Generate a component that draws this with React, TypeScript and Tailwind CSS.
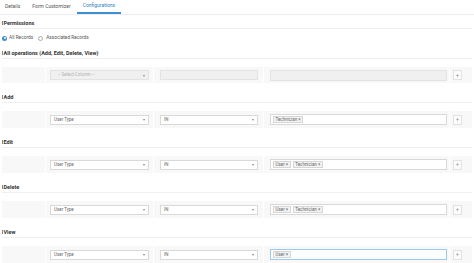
import React from "react";

const font = { fontFamily: "Roboto, 'Liberation Sans', sans-serif" };

function Arrow() {
  return <span className="ml-auto mr-[3px] inline-block h-0 w-0 border-x-[1.5px] border-t-[2px] border-x-transparent border-t-[#888]" />;
}

function Heading({ label, mt }: { label: string; mt: string }) {
  return (
    <div className={`${mt} mx-[2px] flex h-[11px] items-center border-b border-[#efefef] text-[5.5px] font-bold text-[#333]`}>
      <span className="mr-[0.5px] inline-block h-[4px] w-[1px] bg-[#888]" />
      {label}
    </div>
  );
}

function Select({ value, disabled }: { value: string; disabled?: boolean }) {
  return (
    <div
      className={`flex h-full items-center border pt-[1px] text-[4.5px] leading-none ${
        disabled
          ? "border-[#e3e3e3] bg-[#f0f0f0] pl-[7px] text-[#b0b0b0]"
          : "border-[#d9d9d9] bg-white pl-[3px] text-[#666]"
      }`}
    >
      {value}
      <Arrow />
    </div>
  );
}

function Tag({ label }: { label: string }) {
  return (
    <span className="mr-[2px] flex h-[7px] items-center border border-[#d6d6d6] bg-[#f4f4f4] px-[1.5px] pt-[0.5px] text-[4.5px] leading-none text-[#666]">
      {label} ×
    </span>
  );
}

function Row({
  disabled,
  tags = [],
  focus,
  h,
}: {
  disabled?: boolean;
  tags?: string[];
  focus?: boolean;
  h: string;
}) {
  return (
    <div className={`mx-[2px] mt-[8px] flex ${h} items-center bg-[#f8f8f8]`}>
      <div className="h-full w-[44px] border-r border-white" />
      <div className="flex h-full w-[108px] items-center border-r border-white pl-[4px]">
        <div className="h-[10px] w-[99px]">
          {disabled ? <Select value="-- Select Column --" disabled /> : <Select value="User Type" />}
        </div>
      </div>
      <div className="flex h-full w-[110px] items-center border-r border-white pl-[6px]">
        <div className="h-[10px] w-[98px]">
          {disabled ? (
            <div className="h-full border border-[#e3e3e3] bg-[#f0f0f0]" />
          ) : (
            <Select value="IN" />
          )}
        </div>
      </div>
      <div className="flex h-full w-[186px] items-center border-r border-white pl-[6px]">
        <div
          className={`flex h-[11px] w-[177px] items-center border pl-[2px] ${
            disabled
              ? "border-[#e3e3e3] bg-[#f0f0f0]"
              : focus
              ? "border-[#9ccaee] bg-white"
              : "border-[#d9d9d9] bg-white"
          }`}
        >
          {tags.map((t) => (
            <Tag key={t} label={t} />
          ))}
        </div>
      </div>
      <div className="flex h-full flex-1 items-center pl-[3px]">
        <div className="flex h-[10px] w-[9px] items-center justify-center border border-[#e2e2e2] bg-[#fcfcfc] text-[5px] leading-none text-[#888]">
          +
        </div>
      </div>
    </div>
  );
}

export default function App() {
  return (
    <div className="h-[263px] w-[474px] overflow-hidden bg-white" style={font}>
      <div className="flex h-[15px] border-b border-[#ececec] text-[5px] text-[#555]">
        <div className="flex items-center pl-[5px] pr-[6px]">Details</div>
        <div className="flex items-center px-[6px]">Form Customizer</div>
        <div className="flex items-center border-b-2 border-[#3d8fd1] px-[6px] text-[#2f7fc1]">
          Configurations
        </div>
      </div>

      <Heading label="Permissions" mt="mt-[3px]" />
      <div className="mx-[2px] mt-[4px] flex h-[10px] items-center text-[4.8px] text-[#555]">
        <span className="flex h-[5px] w-[5px] items-center justify-center rounded-full bg-[#3d8fd1]">
          <span className="h-[2px] w-[2px] rounded-full bg-white" />
        </span>
        <span className="ml-[2px]">All Records</span>
        <span className="ml-[5px] h-[5px] w-[5px] rounded-full border border-[#aaa] bg-white" />
        <span className="ml-[3px]">Associated Records</span>
      </div>

      <Heading label="All operations (Add, Edit, Delete, View)" mt="mt-[5px]" />
      <Row disabled h="h-[16px]" />

      <Heading label="Add" mt="mt-[9px]" />
      <Row tags={["Technician"]} h="h-[17px]" />

      <Heading label="Edit" mt="mt-[9px]" />
      <Row tags={["User", "Technician"]} h="h-[17px]" />

      <Heading label="Delete" mt="mt-[9px]" />
      <Row tags={["User", "Technician"]} h="h-[17px]" />

      <Heading label="View" mt="mt-[9px]" />
      <Row tags={["User"]} focus h="h-[17px]" />
    </div>
  );
}
